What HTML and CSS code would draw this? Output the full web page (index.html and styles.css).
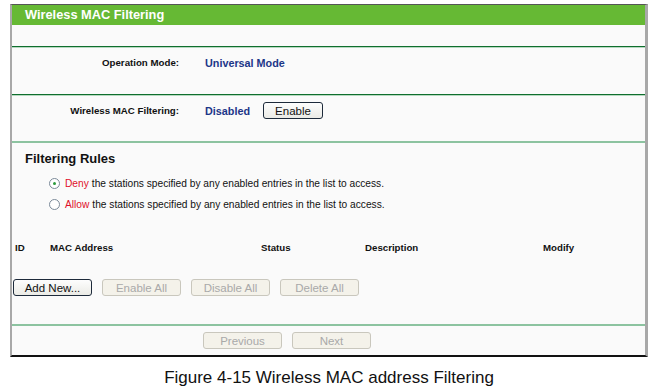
FILE: index.html
```html
<!DOCTYPE html>
<html lang="en">
<head>
  <meta charset="UTF-8">
  <title>Wireless MAC Filtering</title>
  <link rel="stylesheet" href="styles.css">
</head>
<body>
  <div class="panel">
    <div class="title">Wireless MAC Filtering</div>
    <div class="blank"></div>

    <div class="row row-mode">
      <span class="label">Operation Mode:</span>
      <span class="value">Universal Mode</span>
    </div>

    <div class="row row-filter">
      <span class="label">Wireless MAC Filtering:</span>
      <span class="value">Disabled</span>
      <button class="btn btn-enable">Enable</button>
    </div>

    <div class="rules">
      <h3>Filtering Rules</h3>
      <label class="radio"><span class="dot checked"></span><em>Deny</em> the stations specified by any enabled entries in the list to access.</label>
      <label class="radio"><span class="dot"></span><em>Allow</em> the stations specified by any enabled entries in the list to access.</label>

      <div class="thead">
        <span class="c-id">ID</span>
        <span class="c-mac">MAC Address</span>
        <span class="c-status">Status</span>
        <span class="c-desc">Description</span>
        <span class="c-mod">Modify</span>
      </div>

      <div class="actions">
        <button class="btn btn-wide">Add New...</button>
        <button class="btn btn-wide" disabled>Enable All</button>
        <button class="btn btn-wide" disabled>Disable All</button>
        <button class="btn btn-wide" disabled>Delete All</button>
      </div>
    </div>

    <div class="pager">
      <button class="btn btn-wide" disabled>Previous</button>
      <button class="btn btn-wide" disabled>Next</button>
    </div>
  </div>

  <p class="caption">Figure 4-15 Wireless MAC address Filtering</p>
</body>
</html>
```

FILE: styles.css
```css
body {
  margin: 0;
  padding-top: 4px;
  background: white;
  font-family: "Liberation Sans", Arial, sans-serif;
  color: #111;
}
.panel {
  margin-left: 10px;
  width: 633px;
  background: #fafafa;
  border-top: 1px solid #555;
  border-left: 2px solid #a8a8a8;
  border-right: 3px solid #a8a8a8;
  border-bottom: 2px solid #111;
}
.title {
  height: 20px;
  line-height: 20px;
  background: #66b934;
  color: white;
  font-size: 12.8px;
  font-weight: bold;
  padding-left: 13px;
}
.blank {
  height: 21px;
  border-bottom: 1px solid #0f6e2e;
  box-shadow: 0 1px 0 #b6d9c0;
}
.row {
  display: flex;
  align-items: flex-start;
  font-size: 9.7px;
  font-weight: bold;
  border-bottom: 1px solid #0f6e2e;
}
.row-mode {
  height: 46px;
  padding-top: 1px;
  box-shadow: 0 1px 0 #b6d9c0;
}
.row-mode .label, .row-mode .value {
  margin-top: 9px;
}
.row-filter {
  height: 46px;
  border-bottom: 2px solid #8cc3a0;
}
.row-filter .label, .row-filter .value {
  margin-top: 10px;
}
.row-filter .btn {
  margin-top: 7px;
}
.label {
  width: 167px;
  text-align: right;
  margin-right: 26px;
}
.value {
  color: #1c3688;
  font-size: 10.8px;
  margin-right: 13px;
}
.btn {
  font-family: "Liberation Sans", Arial, sans-serif;
  font-size: 11.5px;
  color: #111;
  background: linear-gradient(#fdfdfd, #ebebe6);
  border: 1px solid #1d2a3a;
  border-radius: 3px;
  height: 17px;
  padding: 0;
}
.btn-enable {
  width: 60px;
}
.btn-wide {
  width: 79px;
}
.btn:disabled {
  background: #f4f2ea;
  border-color: #c9c7bd;
  color: #a9a9a9;
}
.rules {
  height: 181px;
  border-bottom: 2px solid #8cc3a0;
  font-size: 10.2px;
}
.rules h3 {
  margin: 0;
  padding: 8px 0 0 13px;
  font-size: 13px;
  line-height: 16px;
}
.radio {
  display: flex;
  align-items: center;
  margin-left: 37px;
  height: 14px;
  margin-top: 7px;
}
.radio:first-of-type {
  margin-top: 9px;
}
.radio em {
  font-style: normal;
  color: #e0102a;
  margin-right: 3px;
}
.dot {
  width: 9px;
  height: 9px;
  border: 1px solid #7b8a99;
  border-radius: 50%;
  background: white;
  margin-right: 5px;
  display: flex;
  align-items: center;
  justify-content: center;
}
.dot.checked::after {
  content: "";
  width: 3px;
  height: 3px;
  border-radius: 50%;
  background: #2b9a3b;
}
.thead {
  display: flex;
  font-weight: bold;
  font-size: 9.7px;
  margin-top: 31px;
  height: 14px;
}
.thead span {
  display: block;
}
.c-id { margin-left: 3px; width: 35px; }
.c-mac { width: 211px; }
.c-status { width: 104px; }
.c-desc { width: 178px; }
.actions {
  display: flex;
  gap: 10px;
  margin-top: 23px;
  margin-left: 1px;
}
.pager {
  height: 29px;
  display: flex;
  align-items: center;
  gap: 10px;
  padding-left: 191px;
}
.caption {
  margin: 11px 0 0;
  text-align: center;
  font-size: 17px;
  color: #111;
  padding-right: 2px;
}
```
